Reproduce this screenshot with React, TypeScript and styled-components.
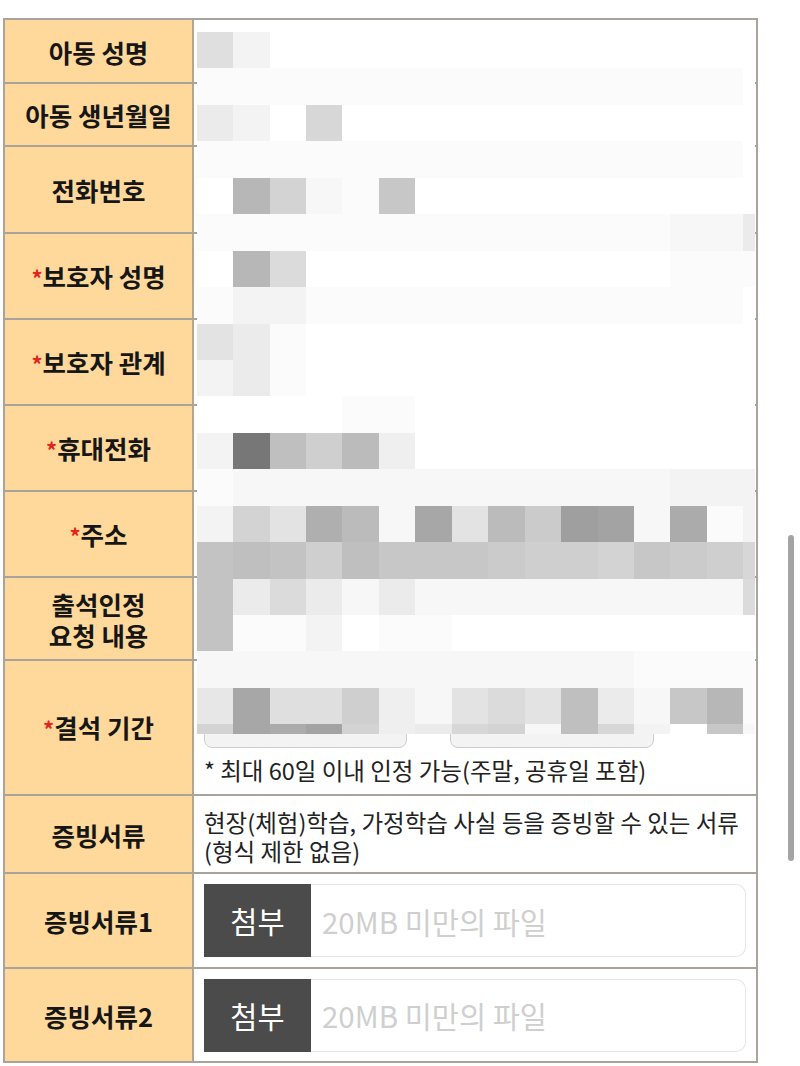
import { createGlobalStyle, styled } from "styled-components";

const GlobalStyle = createGlobalStyle`
  html, body {
    margin: 0;
    padding: 0;
    background: #fff;
  }
  body {
    font-family: "Noto Sans CJK KR", "Noto Sans", sans-serif;
    color: #171717;
  }
`;

const Page = styled.div`
  padding: 18px 0 0 3px;
`;

const Table = styled.div`
  position: relative;
  width: 755px;
  box-sizing: border-box;
  border: 2px solid #aaa59c;
  border-bottom: none;
`;

const Row = styled.div<{ $h: number }>`
  display: grid;
  grid-template-columns: 189px 1fr;
  height: ${(p) => p.$h}px;
  box-sizing: border-box;
  border-bottom: 2px solid #a8a49c;
`;

const Label = styled.div`
  display: flex;
  align-items: center;
  justify-content: center;
  text-align: center;
  background: #fed99b;
  border-right: 2px solid #b4a68c;
  font-size: 25.5px;
  font-weight: 700;
  line-height: 31px;
  color: #161616;
`;

const Req = styled.span`
  color: #e2261c;
  font-size: 22px;
`;

const Value = styled.div<{ $justify?: string; $pad?: string }>`
  display: flex;
  flex-direction: column;
  justify-content: ${(p) => p.$justify ?? "center"};
  padding: ${(p) => p.$pad ?? "0 10px"};
  font-size: 23.5px;
  line-height: 29px;
  color: #222;
  min-width: 0;
`;

const Line = styled.div`
  white-space: nowrap;
`;

const DateRow = styled.div`
  display: flex;
  align-items: center;
  margin-bottom: 8px;
`;

const DateBox = styled.div<{ $w: number }>`
  width: ${(p) => p.$w}px;
  height: 44px;
  box-sizing: border-box;
  background: #f3f3f3;
  border: 1.5px solid #cdcdcd;
  border-radius: 8px;
`;

const Tilde = styled.span`
  width: 43px;
  text-align: center;
  color: #555;
`;

const Note = styled.div`
  line-height: 28px;
  white-space: nowrap;
`;

const Upload = styled.div`
  display: flex;
  align-items: stretch;
  height: 73px;
`;

const AttachBtn = styled.button`
  width: 107px;
  border: none;
  margin: 0;
  padding: 0;
  background: #4b4b4b;
  color: #fff;
  font: inherit;
  font-size: 29.5px;
  cursor: pointer;
`;

const FileInput = styled.input`
  flex: 1;
  min-width: 0;
  margin: 0;
  padding: 0 0 0 11px;
  box-sizing: border-box;
  border: 1.5px solid #e6e6e6;
  border-left: none;
  border-radius: 0 10px 10px 0;
  background: #fff;
  font: inherit;
  font-size: 29.5px;
  outline: none;

  &::placeholder {
    color: #cfcfcf;
  }
`;

/* redaction mosaic laid over the value column */
const Mosaic = styled.div`
  position: absolute;
  left: 191.7px;
  top: 12px;
  display: grid;
  grid-template-columns: repeat(15, 36.45px) 11.55px;
  grid-template-rows: repeat(19, 36.45px) 9.5px;
  pointer-events: none;
`;

const Tile = styled.div<{ $v: number }>`
  background: rgb(${(p) => p.$v}, ${(p) => p.$v}, ${(p) => p.$v});
`;

const Scrollbar = styled.div`
  position: fixed;
  right: 6px;
  top: 535px;
  width: 6px;
  height: 326px;
  border-radius: 3px;
  background: #a4a4a4;
`;

const mosaicRows = [
  "rwzzzzzzzzzzzzzz",
  "yyyyyyyyyyyyyyyz",
  "uwzpzzzzzzzzzzzz",
  "yyyyyyyyyyyyyyyz",
  "zhoxylzzzzzzzzzz",
  "yyyyyyyyyyyyyxxu",
  "zhqzzzzzzzzzzyyy",
  "ywwyyyyyyyyyyyyz",
  "suyzzzzzzzzzzzzz",
  "wuyzzzzzzzzzzzzz",
  "zzzzyyzzzzzzzzzz",
  "w1jnivzzzzzzzzzz",
  "yxxxxxxxxxxxxwww",
  "wosfixdsimbcxeyw",
  "kjknjlllmnnolmnp",
  "kuquxuxxxxxxxxxq",
  "kyywzyyzzzzzzzzz",
  "xxxxxxxxxxxxyyyy",
  "tdrrnvxsqsjuxlhy",
  "odecovupoxjpwzlx",
];

const shade = (c: string) => 255 - (35 - parseInt(c, 36)) * 4;

const plainRows: { label: React.ReactNode; h: number }[] = [
  { label: "아동 성명", h: 64 },
  { label: "아동 생년월일", h: 63 },
  { label: "전화번호", h: 87 },
  { label: <><Req>*</Req>보호자 성명</>, h: 86 },
  { label: <><Req>*</Req>보호자 관계</>, h: 86 },
  { label: <><Req>*</Req>휴대전화</>, h: 86 },
  { label: <><Req>*</Req>주소</>, h: 86 },
  { label: <>출석인정<br />요청 내용</>, h: 83 },
];

const App = () => {
  return (
    <Page>
      <GlobalStyle />
      <Table>
        {plainRows.map((r, i) => (
          <Row key={i} $h={r.h}>
            <Label><span>{r.label}</span></Label>
            <Value />
          </Row>
        ))}
        <Row $h={135}>
          <Label><span><Req>*</Req>결석 기간</span></Label>
          <Value $justify="flex-end" $pad="0 10px 10px">
            <DateRow>
              <DateBox $w={203} />
              <Tilde>~</Tilde>
              <DateBox $w={204} />
            </DateRow>
            <Note>* 최대 60일 이내 인정 가능(주말, 공휴일 포함)</Note>
          </Value>
        </Row>
        <Row $h={78}>
          <Label>증빙서류</Label>
          <Value $pad="5px 10px 0">
            <Line>현장(체험)학습, 가정학습 사실 등을 증빙할 수 있는 서류</Line>
            <Line>(형식 제한 없음)</Line>
          </Value>
        </Row>
        {["증빙서류1", "증빙서류2"].map((name, i) => (
          <Row key={name} $h={i === 0 ? 95 : 94}>
            <Label>{name}</Label>
            <Value>
              <Upload>
                <AttachBtn type="button">첨부</AttachBtn>
                <FileInput readOnly placeholder="20MB 미만의 파일" />
              </Upload>
            </Value>
          </Row>
        ))}
        <Mosaic>
          {mosaicRows.map((row, r) =>
            row
              .padEnd(16, "z")
              .slice(0, 16)
              .split("")
              .map((c, k) => <Tile key={`${r}-${k}`} $v={shade(c)} />)
          )}
        </Mosaic>
      </Table>
      <Scrollbar />
    </Page>
  );
};

export default App;
